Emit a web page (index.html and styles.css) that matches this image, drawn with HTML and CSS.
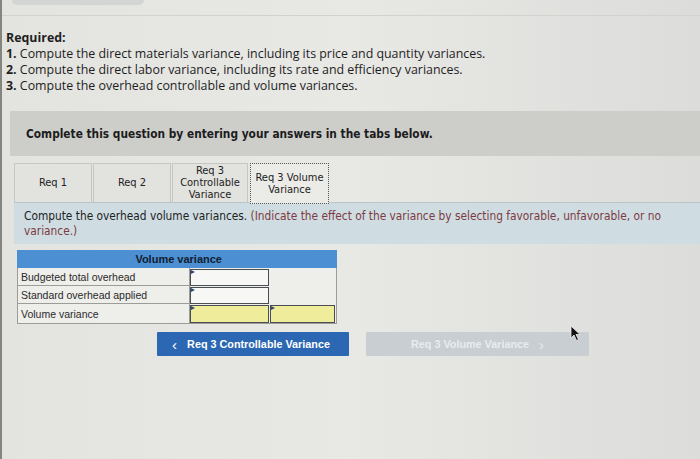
FILE: index.html
```html
<!DOCTYPE html>
<html>
<head>
<meta charset="utf-8">
<link rel="stylesheet" href="styles.css">
</head>
<body>
<div class="page">
  <div class="topbar"><div class="pill"></div></div>
  <div class="required">
    <div class="req-title">Required:</div>
    <div><b>1.</b> Compute the direct materials variance, including its price and quantity variances.</div>
    <div><b>2.</b> Compute the direct labor variance, including its rate and efficiency variances.</div>
    <div><b>3.</b> Compute the overhead controllable and volume variances.</div>
  </div>
  <div class="instr">Complete this question by entering your answers in the tabs below.</div>
  <div class="tabs">
    <div class="tab t1">Req 1</div>
    <div class="tab t2">Req 2</div>
    <div class="tab t3">Req 3<br>Controllable<br>Variance</div>
    <div class="tab t4 active">Req 3 Volume<br>Variance</div>
  </div>
  <div class="question">
    Compute the overhead volume variances. <span class="hint">(Indicate the effect of the variance by selecting favorable, unfavorable, or no variance.)</span>
  </div>
  <div class="grid">
    <div class="ghead">Volume variance</div>
    <div class="ghead-r"></div>
    <div class="lbl">Budgeted total overhead</div>
    <div class="cell"><div class="inp"></div></div>
    <div class="empty"></div>
    <div class="lbl">Standard overhead applied</div>
    <div class="cell"><div class="inp"></div></div>
    <div class="empty"></div>
    <div class="lbl last">Volume variance</div>
    <div class="cell"><div class="inp yellow"></div></div>
    <div class="cell end"><div class="inp yellow"></div></div>
  </div>
  <div class="nav">
    <div class="btn prev"><span class="chev">&lsaquo;</span> Req 3 Controllable Variance</div>
    <div class="btn next">Req 3 Volume Variance <span class="chev">&rsaquo;</span>
      <svg class="cursor" width="12" height="17" viewBox="0 0 12 17"><path d="M1 1 L1 13 L4 10 L6.5 15.5 L8.5 14.5 L6 9.5 L10 9.5 Z" fill="#111" stroke="#eee" stroke-width="0.8"/></svg>
    </div>
  </div>
</div>
</body>
</html>
```

FILE: styles.css
```css
html, body {
  margin: 0;
  padding: 0;
}
body {
  background: #e4e4e1;
  width: 700px;
  height: 459px;
  overflow: hidden;
}
.page {
  border-left: 2px solid #85857f;
  height: 459px;
  box-sizing: border-box;
  background: linear-gradient(90deg, #e3e3e0 0%, #e8e8e5 50%, #dcdcda 100%);
}
.topbar {
  height: 15px;
  border-bottom: 1px solid #d2d2cf;
  position: relative;
}
.pill {
  position: absolute;
  left: 10px;
  top: -6px;
  width: 132px;
  height: 11px;
  border-radius: 5px;
  background: #d3d5d5;
}
.required {
  font-family: "Open Sans", sans-serif;
  font-size: 12.4px;
  color: #1e1e1e;
  line-height: 16px;
  padding: 14px 0 0 4px;
}
.req-title, .required b {
  font-weight: 700;
}
.instr {
  margin: 17px 0 0 8px;
  height: 45px;
  background: #cdcdca;
  font-family: "DejaVu Sans Condensed", "DejaVu Sans", sans-serif;
  font-weight: bold;
  font-size: 11.8px;
  color: #1c1c1c;
  padding-left: 16px;
  display: flex;
  align-items: center;
}
.tabs {
  display: flex;
  margin: 7px 0 0 12px;
  gap: 1px;
  height: 39px;
  align-items: flex-end;
}
.tab {
  font-family: "DejaVu Sans Condensed", "DejaVu Sans", sans-serif;
  font-size: 11px;
  line-height: 11.8px;
  color: #222;
  text-align: center;
  background: #e2e2df;
  border: 1px solid #c6c6c3;
  border-bottom: none;
  height: 39px;
  box-sizing: border-box;
  display: flex;
  align-items: center;
  justify-content: center;
}
.t1 { width: 78px; }
.t2 { width: 78px; }
.t3 { width: 76px; }
.t4 { width: 79px; margin-left: 1px; }
.active {
  background: #ebebe8;
  border: 1px dotted #555;
  height: 41px;
  margin-bottom: -2px;
  position: relative;
  z-index: 1;
}
.question {
  margin-left: 12px;
  height: 42px;
  box-sizing: border-box;
  background: #cfdde3;
  border-top: 1px solid #b8c6cc;
  font-family: "DejaVu Sans Condensed", "DejaVu Sans", sans-serif;
  font-size: 11.8px;
  line-height: 15px;
  color: #222;
  padding: 6px 24px 0 10px;
}
.hint {
  color: #7d3a40;
}
.grid {
  margin: 6px 0 0 15px;
  display: grid;
  grid-template-columns: 173px 80px 67px;
  grid-template-rows: 18px 18px 18px 19px;
  width: 320px;
  font-family: "Liberation Sans", Arial, sans-serif;
  font-size: 10.5px;
  color: #2a2a2a;
  background: #eeeeeb;
  border-bottom: 1px solid #9c9c98;
}
.ghead {
  grid-column: 1 / 3;
  background: #4c8fd3;
  color: #102030;
  font-weight: bold;
  font-size: 11px;
  display: flex;
  align-items: center;
  justify-content: flex-end;
  padding-right: 48px;
}
.ghead-r {
  background: #4c8fd3;
}
.lbl {
  border: 1px solid #9c9c98;
  border-top: none;
  padding-left: 3px;
  display: flex;
  align-items: center;
  background: #eeeeeb;
}
.lbl.last {
  border-bottom: none;
}
.cell {
  display: flex;
  padding: 1px 1px 0 0;
}
.cell.end {
  border-right: 1px solid #9c9c98;
}
.inp {
  flex: 1;
  border: 1.5px solid #4a4d52;
  background: #f7f7f5;
  position: relative;
}
.inp::before {
  content: "";
  position: absolute;
  left: 0;
  top: 0;
  border-left: 4px solid #2a4a7a;
  border-top: 2px solid transparent;
  border-bottom: 2px solid transparent;
}
.yellow {
  background: #efec9c;
}
.empty {
  background: #eeeeeb;
  border-right: 1px solid #9c9c98;
}
.nav {
  display: flex;
  margin: 8px 0 0 155px;
  gap: 17px;
}
.btn {
  height: 24px;
  box-sizing: border-box;
  font-family: "Liberation Sans", Arial, sans-serif;
  font-weight: bold;
  font-size: 10.8px;
  display: flex;
  align-items: center;
  justify-content: center;
  border-radius: 1px;
}
.prev {
  width: 192px;
  background: #2c67b3;
  color: #fff;
  gap: 10px;
  padding-right: 4px;
}
.next {
  width: 223px;
  background: #c9ced2;
  color: #e8ecef;
  gap: 10px;
  position: relative;
}
.chev {
  font-size: 15px;
  font-weight: normal;
  line-height: 1;
}
.cursor {
  position: absolute;
  left: 204px;
  top: -7px;
}
```
